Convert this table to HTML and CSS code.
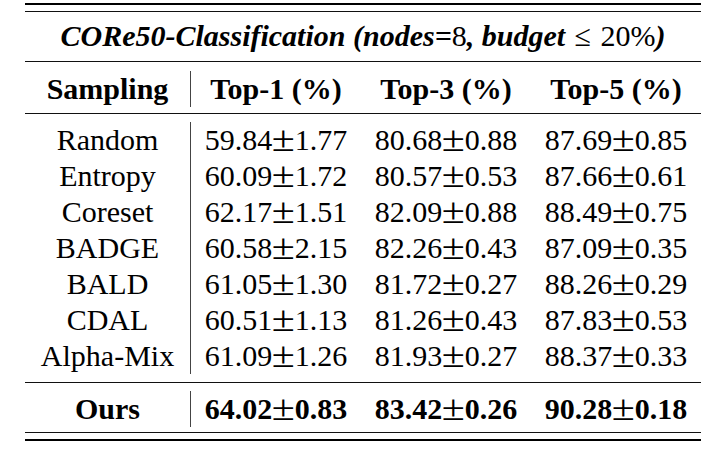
FILE: index.html
```html
<!DOCTYPE html>
<html>
<head>
<meta charset="utf-8">
<link rel="stylesheet" href="styles.css">
</head>
<body>
<div class="page">
  <div class="tbl">
    <div class="rule thick"></div>
    <div class="gap"></div>
    <div class="rule"></div>
    <div class="title"><span class="bi">CORe50-Classification (nodes=</span><span class="rm">8</span><span class="bi">, budget</span><span class="rm math"> ≤ 20%</span><span class="bi">)</span></div>
    <div class="rule"></div>
    <div class="section head">
      <div class="row bold"><div class="c1">Sampling</div><div>Top-1 (%)</div><div>Top-3 (%)</div><div>Top-5 (%)</div></div>
    </div>
    <div class="rule"></div>
    <div class="section body">
      <div class="row"><div class="c1">Random</div><div>59.84<span class="pm">±</span>1.77</div><div>80.68<span class="pm">±</span>0.88</div><div>87.69<span class="pm">±</span>0.85</div></div>
      <div class="row"><div class="c1">Entropy</div><div>60.09<span class="pm">±</span>1.72</div><div>80.57<span class="pm">±</span>0.53</div><div>87.66<span class="pm">±</span>0.61</div></div>
      <div class="row"><div class="c1">Coreset</div><div>62.17<span class="pm">±</span>1.51</div><div>82.09<span class="pm">±</span>0.88</div><div>88.49<span class="pm">±</span>0.75</div></div>
      <div class="row"><div class="c1">BADGE</div><div>60.58<span class="pm">±</span>2.15</div><div>82.26<span class="pm">±</span>0.43</div><div>87.09<span class="pm">±</span>0.35</div></div>
      <div class="row"><div class="c1">BALD</div><div>61.05<span class="pm">±</span>1.30</div><div>81.72<span class="pm">±</span>0.27</div><div>88.26<span class="pm">±</span>0.29</div></div>
      <div class="row"><div class="c1">CDAL</div><div>60.51<span class="pm">±</span>1.13</div><div>81.26<span class="pm">±</span>0.43</div><div>87.83<span class="pm">±</span>0.53</div></div>
      <div class="row"><div class="c1">Alpha-Mix</div><div>61.09<span class="pm">±</span>1.26</div><div>81.93<span class="pm">±</span>0.27</div><div>88.37<span class="pm">±</span>0.33</div></div>
    </div>
    <div class="rule"></div>
    <div class="section ours">
      <div class="row bold"><div class="c1">Ours</div><div>64.02<span class="pm">±</span>0.83</div><div>83.42<span class="pm">±</span>0.26</div><div>90.28<span class="pm">±</span>0.18</div></div>
    </div>
    <div class="rule"></div>
    <div class="gap"></div>
    <div class="rule thick"></div>
  </div>
</div>
</body>
</html>
```

FILE: styles.css
```css
html, body {
  margin: 0;
  padding: 0;
  background: #ffffff;
}

.page {
  padding: 3px 0 0 25px;
  font-family: "Liberation Serif", "Times New Roman", "DejaVu Serif", serif;
  font-size: 30px;
  color: #000;
}

.tbl {
  width: 676px;
}

.rule {
  height: 1px;
  background: #111;
}

.rule.thick {
  height: 2px;
  background: #000;
}

.gap {
  height: 6px;
}

.title {
  height: 36px;
  line-height: 36px;
  padding: 6px 0 7px;
  text-align: center;
  white-space: nowrap;
}

.bi {
  font-weight: bold;
  font-style: italic;
}

.rm {
  font-weight: normal;
  font-style: normal;
}

.math {
  word-spacing: 2px;
}

.pm {
  display: inline-block;
  font-weight: normal;
  margin: 0 3px;
  transform: scale(1.4, 1.2);
  transform-origin: 50% 70%;
}

.section.head {
  padding: 9px 0 6px;
}

.section.body {
  padding: 8px 0 8px;
}

.section.ours {
  padding: 8px 0 5px;
}

.row {
  display: grid;
  grid-template-columns: 166px 170px 170px 170px;
  height: 36px;
  line-height: 36px;
  text-align: center;
  white-space: nowrap;
}

.row .c1 {
  border-right: 1px solid #444;
}

.bold {
  font-weight: bold;
}
```
